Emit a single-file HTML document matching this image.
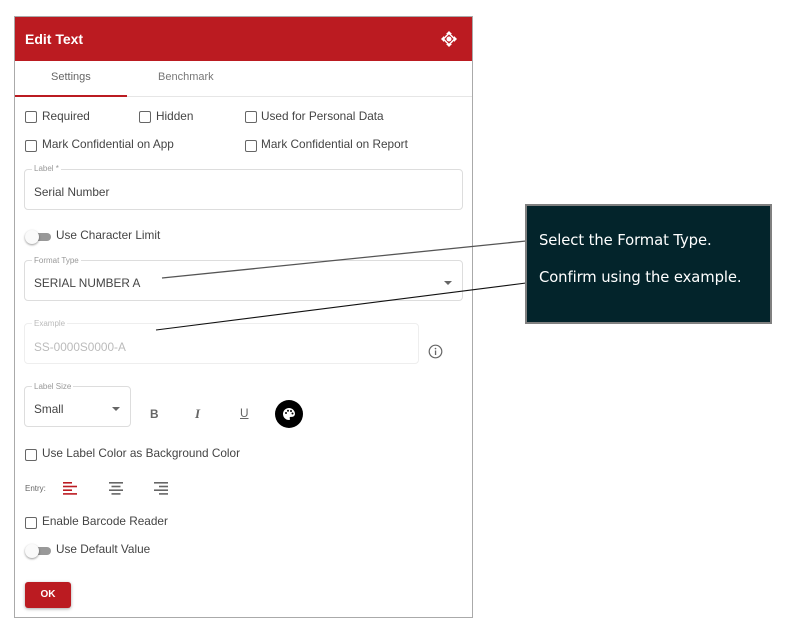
<!DOCTYPE html>
<html><head><meta charset="utf-8"><style>
*{box-sizing:border-box;margin:0;padding:0}
body{width:786px;height:628px;background:#fff;position:relative;font-family:"Liberation Sans",sans-serif;overflow:hidden;color:#444}
.a{position:absolute}
.dlg{left:14px;top:16px;width:459px;height:602px;border:1px solid #aaa;background:#fff}
.hdr{left:0;top:0;width:457px;height:44px;background:#bb1b21;color:#fff;font-weight:bold;font-size:14px;line-height:44px;padding-left:10px}
.cb{width:12px;height:12px;border:1px solid #666;border-radius:2px;background:#fff}
.t{font-size:11.8px;color:#444;white-space:nowrap}
.fld{border:1px solid #ddd;border-radius:4px}
.lg{font-size:8px;color:#999;background:#fff;padding:0 2px}
.tg{width:26px;height:10px}
.tg .tr{position:absolute;left:4px;top:1px;width:22px;height:8px;border-radius:4px;background:#999}
.tg .kn{position:absolute;left:0;top:-2px;width:14px;height:14px;border-radius:7px;background:#fafafa;box-shadow:0 1px 2px rgba(0,0,0,.4)}
</style></head><body>
<div class="a dlg">
 <div class="a hdr">Edit Text</div>
 <svg class="a" style="left:425px;top:13px" width="18" height="18" viewBox="0 0 18 18"><g fill="#fff"><path d="M9 1l3 3H6z"/><path d="M9 17l3-3H6z"/><path d="M1 9l3-3v6z"/><path d="M17 9l-3-3v6z"/><circle cx="9" cy="9" r="2.5"/><rect x="5" y="5" width="8" height="8" transform="rotate(45 9 9)" fill="none" stroke="#fff" stroke-width="1.5"/></g></svg>
 <div class="a t" style="left:36px;top:54px;font-size:11px;color:#666">Settings</div>
 <div class="a t" style="left:143px;top:54px;font-size:11px;color:#777">Benchmark</div>
 <div class="a" style="left:0;top:79px;width:457px;height:1px;background:#e6e6e6"></div>
 <div class="a" style="left:0;top:78px;width:112px;height:2px;background:#bb1b21"></div>

 <div class="a cb" style="left:10px;top:94px"></div><div class="a t" style="left:27px;top:92px">Required</div>
 <div class="a cb" style="left:124px;top:94px"></div><div class="a t" style="left:141px;top:92px">Hidden</div>
 <div class="a cb" style="left:230px;top:94px"></div><div class="a t" style="left:246px;top:92px">Used for Personal Data</div>
 <div class="a cb" style="left:10px;top:123px"></div><div class="a t" style="left:27px;top:120px">Mark Confidential on App</div>
 <div class="a cb" style="left:230px;top:123px"></div><div class="a t" style="left:246px;top:120px">Mark Confidential on Report</div>

 <div class="a fld" style="left:9px;top:152px;width:439px;height:41px"></div>
 <div class="a lg" style="left:17px;top:147px">Label *</div>
 <div class="a t" style="left:19px;top:168px">Serial Number</div>

 <div class="a tg" style="left:10px;top:215px"><div class="tr"></div><div class="kn"></div></div>
 <div class="a t" style="left:41px;top:211px">Use Character Limit</div>

 <div class="a fld" style="left:9px;top:243px;width:439px;height:41px"></div>
 <div class="a lg" style="left:17px;top:239px">Format Type</div>
 <div class="a t" style="left:19px;top:259px">SERIAL NUMBER A</div>
 <svg class="a" style="left:429px;top:264px" width="8" height="5"><path d="M0 0h8L4 4z" fill="#666"/></svg>

 <div class="a fld" style="left:9px;top:306px;width:395px;height:41px;border-color:#eee"></div>
 <div class="a lg" style="left:17px;top:302px;color:#bbb">Example</div>
 <div class="a t" style="left:19px;top:323px;color:#bbb">SS-0000S0000-A</div>
 <svg class="a" style="left:413px;top:327px" width="15" height="15" viewBox="0 0 15 15"><circle cx="7.5" cy="7.5" r="6.3" fill="none" stroke="#666" stroke-width="1.2"/><rect x="6.9" y="6.5" width="1.3" height="4.5" fill="#666"/><circle cx="7.5" cy="4.6" r=".8" fill="#666"/></svg>

 <div class="a fld" style="left:9px;top:369px;width:107px;height:41px"></div>
 <div class="a lg" style="left:17px;top:365px">Label Size</div>
 <div class="a t" style="left:19px;top:385px">Small</div>
 <svg class="a" style="left:97px;top:390px" width="8" height="5"><path d="M0 0h8L4 4z" fill="#666"/></svg>
 <div class="a t" style="left:135px;top:390px;font-weight:bold;color:#666">B</div>
 <div class="a t" style="left:180px;top:389px;font-style:italic;font-weight:bold;color:#666;font-family:'Liberation Serif',serif;font-size:13px">I</div>
 <div class="a t" style="left:225px;top:389px;text-decoration:underline;color:#666">U</div>
 <div class="a" style="left:260px;top:383px;width:28px;height:28px;border-radius:14px;background:#000"></div>
 <svg class="a" style="left:266px;top:389px" width="16" height="16" viewBox="0 0 16 16"><path d="M8 2a6 6 0 0 0 0 12c1 0 1.3-.8.8-1.5-.5-.8 0-1.6 1-1.6H11a3 3 0 0 0 3-3C14 4.6 11.3 2 8 2z" fill="#fff"/><g fill="#000"><circle cx="5" cy="7" r="1"/><circle cx="7" cy="4.8" r="1"/><circle cx="10" cy="5" r="1"/><circle cx="11.5" cy="7.5" r="1"/></g></svg>

 <div class="a cb" style="left:10px;top:432px"></div><div class="a t" style="left:27px;top:429px">Use Label Color as Background Color</div>

 <div class="a t" style="left:10px;top:467px;font-size:8px;color:#666">Entry:</div>
 <svg class="a" style="left:48px;top:465px" width="14" height="13"><g fill="#bb1b21"><rect y="0" width="9" height="1.6"/><rect y="3.7" width="14" height="1.6"/><rect y="7.4" width="9" height="1.6"/><rect y="11.1" width="14" height="1.6"/></g></svg>
 <svg class="a" style="left:94px;top:465px" width="14" height="13"><g fill="#666"><rect y="0" width="14" height="1.6"/><rect x="2.5" y="3.7" width="9" height="1.6"/><rect y="7.4" width="14" height="1.6"/><rect x="2.5" y="11.1" width="9" height="1.6"/></g></svg>
 <svg class="a" style="left:139px;top:465px" width="14" height="13"><g fill="#666"><rect y="0" width="14" height="1.6"/><rect x="5" y="3.7" width="9" height="1.6"/><rect y="7.4" width="14" height="1.6"/><rect x="5" y="11.1" width="9" height="1.6"/></g></svg>

 <div class="a cb" style="left:10px;top:500px"></div><div class="a t" style="left:27px;top:497px">Enable Barcode Reader</div>
 <div class="a tg" style="left:10px;top:529px"><div class="tr"></div><div class="kn"></div></div>
 <div class="a t" style="left:41px;top:525px">Use Default Value</div>

 <div class="a" style="left:10px;top:565px;width:46px;height:26px;background:#bb1b21;border-radius:3px;box-shadow:0 1px 3px rgba(0,0,0,.35);color:#fff;font-weight:bold;font-size:10px;text-align:center;line-height:26px">OK</div>
</div>

<svg class="a" style="left:0;top:0" width="786" height="628"><line x1="526" y1="241" x2="162" y2="278" stroke="#555" stroke-width="1.3"/><line x1="526" y1="283" x2="156" y2="330" stroke="#111" stroke-width="1.1"/></svg>
<div class="a" style="left:525px;top:204px;width:247px;height:120px;background:#03242b;border:2px solid #808080"></div>
<div class="a" style="left:539px;top:232px;color:#fff;font-family:'DejaVu Sans','Liberation Sans',sans-serif;font-size:14.8px;letter-spacing:-0.1px">Select the Format Type.</div>
<div class="a" style="left:539px;top:269px;color:#fff;font-family:'DejaVu Sans','Liberation Sans',sans-serif;font-size:14.8px;letter-spacing:-0.1px">Confirm using the example.</div>
</body></html>
